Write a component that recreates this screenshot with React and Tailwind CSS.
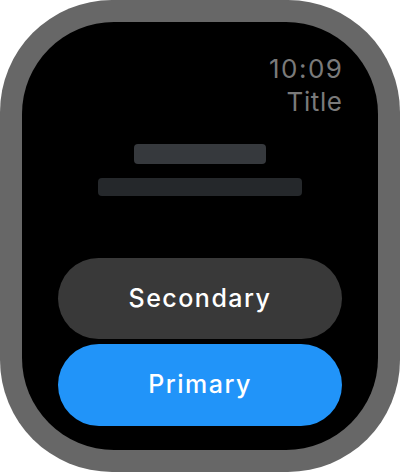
export default function App() {
  return (
    <div className="w-[400px] h-[472px] bg-white" style={{ fontFamily: "Inter, 'Noto Sans', sans-serif" }}>
      {/* watch case */}
      <div className="w-full h-full bg-[#676767] rounded-[112px] p-[22px]">
        {/* screen */}
        <div className="w-full h-full bg-black rounded-[92px] flex flex-col pt-[30px] px-[36px] pb-[24px]">
          <div className="flex flex-col items-end text-[26px] leading-[33px] text-[#7a7a7a]">
            <span className="tracking-[1.5px] mr-[-1.5px]">10:09</span>
            <span className="tracking-[0.6px] mr-[-0.6px]">Title</span>
          </div>
          <div className="flex flex-col items-center mt-[26px]">
            <div className="w-[132px] h-[20px] rounded-[4px] bg-[#36393d]" />
            <div className="w-[204px] h-[18px] rounded-[4px] bg-[#25282b] mt-[14px]" />
          </div>
          <div className="mt-auto flex flex-col gap-[5px]">
            <button className="h-[81px] rounded-full bg-[#393939] text-white text-[25px] font-medium tracking-[1.5px]">
              Secondary
            </button>
            <button className="h-[82px] rounded-full bg-[#2194f9] text-white text-[25px] font-medium tracking-[1.5px]">
              Primary
            </button>
          </div>
        </div>
      </div>
    </div>
  );
}
